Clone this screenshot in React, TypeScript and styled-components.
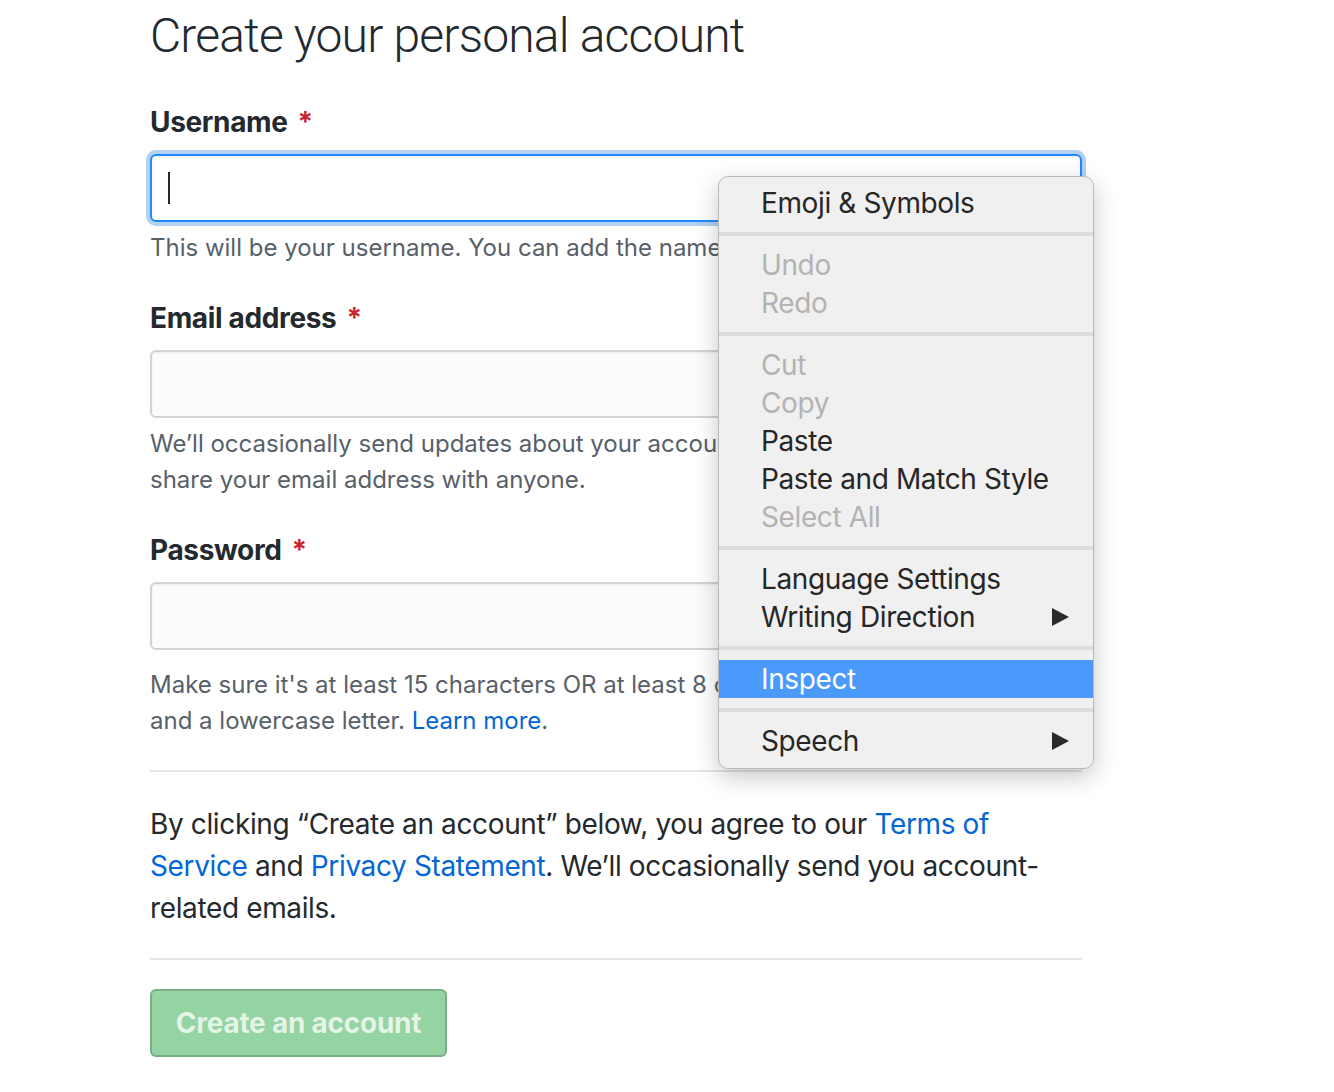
import styled, { createGlobalStyle } from 'styled-components';

const GlobalStyle = createGlobalStyle`
  html, body {
    margin: 0;
    padding: 0;
    background: #ffffff;
  }
  body {
    font-family: Inter, Roboto, "Liberation Sans", sans-serif;
    color: #24292e;
  }
`;

const Page = styled.div`
  position: relative;
  width: 932px;
  padding-left: 150px;
`;

const Title = styled.h1`
  margin: 0;
  font-family: Roboto, "Liberation Sans", sans-serif;
  font-size: 48px;
  line-height: 72px;
  font-weight: 300;
  letter-spacing: -0.8px;
  color: #24292e;
`;

const Field = styled.div<{ $first?: boolean }>`
  margin-top: ${(p) => (p.$first ? '29px' : '31px')};
`;

const Label = styled.label`
  display: block;
  font-size: 28px;
  line-height: 42px;
  font-weight: 700;
  letter-spacing: -0.35px;
  margin-bottom: 11px;
`;

const Required = styled.span`
  color: #cb2431;
  margin-left: 10px;
`;

const Input = styled.div<{ $focused?: boolean }>`
  box-sizing: border-box;
  height: 68px;
  display: flex;
  align-items: center;
  padding-left: 16px;
  border-radius: 6px;
  border: 2px solid ${(p) => (p.$focused ? '#2188ff' : '#d1d5da')};
  background: ${(p) => (p.$focused ? '#ffffff' : '#fafbfc')};
  box-shadow: ${(p) =>
    p.$focused
      ? 'inset 0 1px 2px rgba(27,31,35,0.075), 0 0 0 4px rgba(3,102,214,0.3)'
      : 'inset 0 1px 2px rgba(27,31,35,0.075)'};
`;

const Caret = styled.span`
  width: 2px;
  height: 32px;
  background: #24292e;
`;

const Note = styled.p<{ $gap?: number }>`
  margin: ${(p) => p.$gap ?? 8}px 0 0;
  font-size: 24px;
  line-height: 36px;
  color: #586069;
`;

const Link = styled.a`
  color: #0366d6;
  text-decoration: none;
`;

const Rule = styled.hr<{ $gap: number }>`
  margin: ${(p) => p.$gap}px 0 0;
  border: 0;
  height: 2px;
  background: #e1e4e8;
`;

const Terms = styled.p`
  margin: 31px 0 0;
  font-size: 28px;
  line-height: 42px;
  letter-spacing: -0.37px;
  color: #24292e;
`;

const SubmitButton = styled.button`
  margin-top: 29px;
  box-sizing: border-box;
  width: 297px;
  height: 68px;
  border-radius: 6px;
  border: 2px solid rgba(27, 31, 35, 0.2);
  background: #94d3a2;
  color: rgba(255, 255, 255, 0.75);
  font-family: Inter, Roboto, "Liberation Sans", sans-serif;
  font-size: 28px;
  font-weight: 700;
  letter-spacing: -0.25px;
  padding: 0;
`;

const Menu = styled.div`
  position: absolute;
  left: 718px;
  top: 176px;
  box-sizing: border-box;
  width: 376px;
  padding: 7px 0 8px;
  background: #f0f0f0;
  border: 1px solid #b9b9b9;
  border-radius: 10px;
  box-shadow: 0 8px 24px rgba(0, 0, 0, 0.22);
  font-family: Inter, Roboto, "Liberation Sans", sans-serif;
`;

const MenuItem = styled.div<{ $disabled?: boolean; $active?: boolean }>`
  height: 38px;
  display: flex;
  align-items: center;
  justify-content: space-between;
  padding: 0 24px 0 42px;
  font-size: 28px;
  letter-spacing: -0.38px;
  color: ${(p) => (p.$active ? '#ffffff' : p.$disabled ? '#b3b3b3' : '#262626')};
  background: ${(p) => (p.$active ? '#4a9afb' : 'transparent')};
`;

const Separator = styled.div`
  height: 4px;
  margin: 10px 0;
  background: #dddddd;
`;

const Arrow = styled.span`
  width: 0;
  height: 0;
  border-top: 9px solid transparent;
  border-bottom: 9px solid transparent;
  border-left: 17px solid #2b2b2b;
`;

export default function App() {
  return (
    <>
      <GlobalStyle />
      <Page>
        <Title>Create your personal account</Title>

        <Field $first>
          <Label>
            Username<Required>*</Required>
          </Label>
          <Input $focused>
            <Caret />
          </Input>
          <Note>This will be your username. You can add the name of your organization later.</Note>
        </Field>

        <Field>
          <Label>
            Email address<Required>*</Required>
          </Label>
          <Input />
          <Note>
            We’ll occasionally send updates about your account to this inbox. We’ll never share your email
            address with anyone.
          </Note>
        </Field>

        <Field>
          <Label>
            Password<Required>*</Required>
          </Label>
          <Input />
          <Note $gap={17}>
            Make sure it's at least 15 characters OR at least 8 characters including a number and a lowercase
            letter. <Link href="#">Learn more</Link>.
          </Note>
        </Field>

        <Rule $gap={31} />
        <Terms>
          By clicking “Create an account” below, you agree to our <Link href="#">Terms of Service</Link> and{' '}
          <Link href="#">Privacy Statement</Link>. We’ll occasionally send you account-related emails.
        </Terms>
        <Rule $gap={29} />
        <SubmitButton disabled>Create an account</SubmitButton>

        <Menu>
          <MenuItem>Emoji &amp; Symbols</MenuItem>
          <Separator />
          <MenuItem $disabled>Undo</MenuItem>
          <MenuItem $disabled>Redo</MenuItem>
          <Separator />
          <MenuItem $disabled>Cut</MenuItem>
          <MenuItem $disabled>Copy</MenuItem>
          <MenuItem>Paste</MenuItem>
          <MenuItem>Paste and Match Style</MenuItem>
          <MenuItem $disabled>Select All</MenuItem>
          <Separator />
          <MenuItem>Language Settings</MenuItem>
          <MenuItem>
            Writing Direction
            <Arrow />
          </MenuItem>
          <Separator />
          <MenuItem $active>Inspect</MenuItem>
          <Separator />
          <MenuItem>
            Speech
            <Arrow />
          </MenuItem>
        </Menu>
      </Page>
    </>
  );
}
